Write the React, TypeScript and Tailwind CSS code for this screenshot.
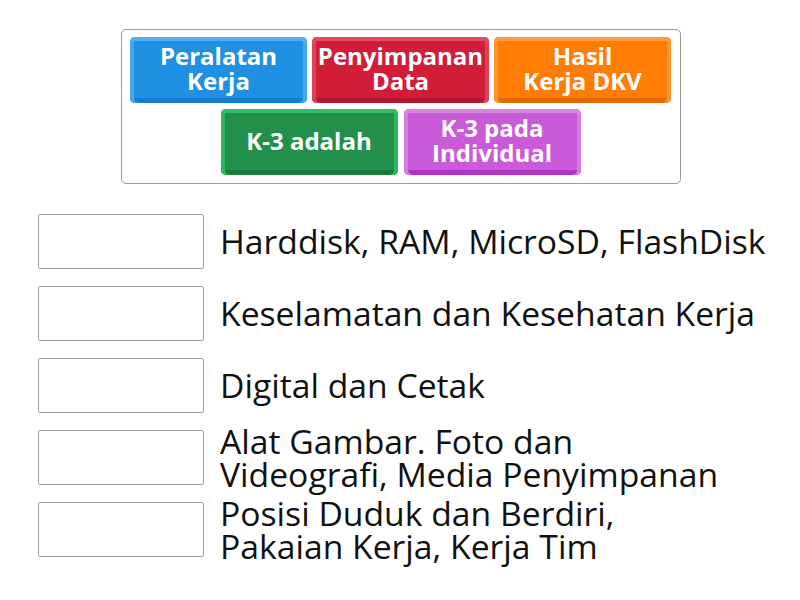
import React from "react";

type Tile = { label: string[]; face: string; bevel: string };

const topRow: Tile[] = [
  {
    label: ["Peralatan", "Kerja"],
    face: "bg-[#1f90e2]",
    bevel: "shadow-[inset_0_4px_0_#52b0f0,inset_4px_0_0_#45a8ee,inset_-4px_0_0_#45a8ee,inset_0_-5px_0_#167ccc]",
  },
  {
    label: ["Penyimpanan", "Data"],
    face: "bg-[#d21d38]",
    bevel: "shadow-[inset_0_4px_0_#e04d62,inset_4px_0_0_#dc4257,inset_-4px_0_0_#dc4257,inset_0_-5px_0_#b3172f]",
  },
  {
    label: ["Hasil", "Kerja DKV"],
    face: "bg-[#ff7c05]",
    bevel: "shadow-[inset_0_4px_0_#ff9a3d,inset_4px_0_0_#ff9233,inset_-4px_0_0_#ff9233,inset_0_-5px_0_#e26a00]",
  },
];

const bottomRow: Tile[] = [
  {
    label: ["K-3 adalah"],
    face: "bg-[#22904b]",
    bevel: "shadow-[inset_0_4px_0_#33be64,inset_4px_0_0_#2db85e,inset_-4px_0_0_#2db85e,inset_0_-5px_0_#1b7b3f]",
  },
  {
    label: ["K-3 pada", "Individual"],
    face: "bg-[#c95bd9]",
    bevel: "shadow-[inset_0_4px_0_#d886e4,inset_4px_0_0_#d47ce1,inset_-4px_0_0_#d47ce1,inset_0_-5px_0_#b431c9]",
  },
];

const answers: string[][] = [
  ["Harddisk, RAM, MicroSD, FlashDisk"],
  ["Keselamatan dan Kesehatan Kerja"],
  ["Digital dan Cetak"],
  ["Alat Gambar. Foto dan", "Videografi, Media Penyimpanan"],
  ["Posisi Duduk dan Berdiri,", "Pakaian Kerja, Kerja Tim"],
];

function Card({ tile }: { tile: Tile }) {
  return (
    <div
      className={`w-[177px] h-[66px] rounded-[5px] ${tile.face} ${tile.bevel} flex flex-col items-center justify-center pb-[4px] text-white font-bold text-[24px] leading-[25px] text-center`}
    >
      {tile.label.map((l) => (
        <span key={l} className="whitespace-nowrap">
          {l}
        </span>
      ))}
    </div>
  );
}

export default function App() {
  return (
    <div
      className="w-[800px] h-[600px] bg-white overflow-hidden"
      style={{ fontFamily: '"Open Sans", "Noto Sans", sans-serif' }}
    >
      <div className="flex justify-center pt-[29px] pl-[1px]">
        <div className="w-[560px] h-[155px] border border-[#9a9a9a] rounded-[5px] flex flex-col items-center gap-[6px] pt-[7px]">
          <div className="flex gap-[5px]">
            {topRow.map((t) => (
              <Card key={t.label.join()} tile={t} />
            ))}
          </div>
          <div className="flex gap-[6px]">
            {bottomRow.map((t) => (
              <Card key={t.label.join()} tile={t} />
            ))}
          </div>
        </div>
      </div>

      <div className="flex flex-col gap-[17px] pl-[38px] pt-[30px]">
        {answers.map((lines) => (
          <div key={lines.join()} className="flex items-center gap-[16px] h-[55px]">
            <div className="w-[166px] h-[55px] shrink-0 border border-[#a0a0a0] rounded-[2px] bg-white" />
            <div className="text-[33.7px] leading-[33px] text-[#111] whitespace-nowrap">
              {lines.map((l) => (
                <div key={l}>{l}</div>
              ))}
            </div>
          </div>
        ))}
      </div>
    </div>
  );
}
